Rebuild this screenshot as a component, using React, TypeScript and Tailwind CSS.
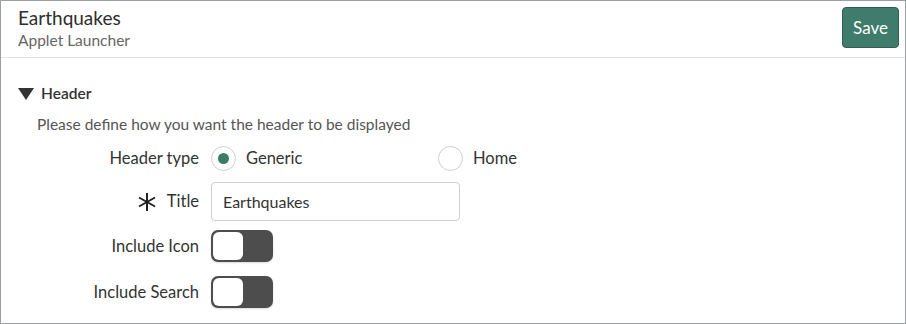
import React from "react";

function Toggle() {
  return (
    <div className="w-[62px] h-[32px] rounded-[7px] bg-[#4d4d4d] p-[2px] flex shadow-[0_1px_2px_rgba(0,0,0,0.15)]">
      <div className="w-[30px] h-full rounded-[6px] bg-white" />
    </div>
  );
}

export default function App() {
  return (
    <div
      className="w-[906px] h-[324px] bg-white border border-[#9aa0a6] text-[#333] overflow-hidden"
      style={{ fontFamily: "Lato, 'Noto Sans', sans-serif" }}
    >
      <div className="h-[57px] border-b border-[#e3e3e3] flex items-start justify-between pl-[17px] pr-[6px]">
        <div className="pt-[5px]">
          <div className="text-[19px] leading-[24px] text-[#2e2e2e]">Earthquakes</div>
          <div className="text-[15.5px] leading-[20px] text-[#666]">Applet Launcher</div>
        </div>
        <button className="mt-[6px] w-[57px] h-[41px] rounded-[4px] bg-[#3f7c6c] border border-[#2f5f53] text-white text-[17px]">
          Save
        </button>
      </div>
      <div className="pl-[17px] pt-[26px]">
        <div className="flex items-center h-[20px]">
          <svg width="16" height="12" viewBox="0 0 16 12" className="mr-[7px]">
            <polygon points="0,0 16,0 8,12" fill="#333" />
          </svg>
          <span className="text-[15.5px] font-semibold text-[#333]">Header</span>
        </div>
        <div className="mt-[10px] ml-[19px] text-[15.5px] leading-[20px] text-[#555]">
          Please define how you want the header to be displayed
        </div>
      </div>
      <div className="mt-[12px] flex flex-col text-[16.5px]">
        <div className="flex items-center h-[24px]">
          <div className="w-[198px] text-right">Header type</div>
          <div className="ml-[12px] w-[227px] flex items-center">
            <div className="w-[25px] h-[25px] rounded-full border border-[#cfcfcf] flex items-center justify-center">
              <div className="w-[11px] h-[11px] rounded-full bg-[#3a7d6b]" />
            </div>
            <span className="ml-[10px]">Generic</span>
          </div>
          <div className="flex items-center">
            <div className="w-[25px] h-[25px] rounded-full border border-[#cfcfcf]" />
            <span className="ml-[10px]">Home</span>
          </div>
        </div>
        <div className="flex items-center h-[39px] mt-[12px]">
          <div className="w-[198px] flex justify-end items-center">
            <svg width="20" height="20" viewBox="0 0 20 20" className="mr-[10px]">
              <g stroke="#222" strokeWidth="2" strokeLinecap="butt">
                <line x1="10" y1="1" x2="10" y2="19" />
                <line x1="2" y1="5.5" x2="18" y2="14.5" />
                <line x1="2" y1="14.5" x2="18" y2="5.5" />
              </g>
            </svg>
            <span>Title</span>
          </div>
          <div className="ml-[12px] w-[249px] h-[39px] rounded-[4px] border border-[#cfcfcf] flex items-center px-[11px] text-[16px]">
            Earthquakes
          </div>
        </div>
        <div className="flex items-center h-[32px] mt-[9px]">
          <div className="w-[198px] text-right">Include Icon</div>
          <div className="ml-[12px]">
            <Toggle />
          </div>
        </div>
        <div className="flex items-center h-[32px] mt-[14px]">
          <div className="w-[198px] text-right">Include Search</div>
          <div className="ml-[12px]">
            <Toggle />
          </div>
        </div>
      </div>
    </div>
  );
}
